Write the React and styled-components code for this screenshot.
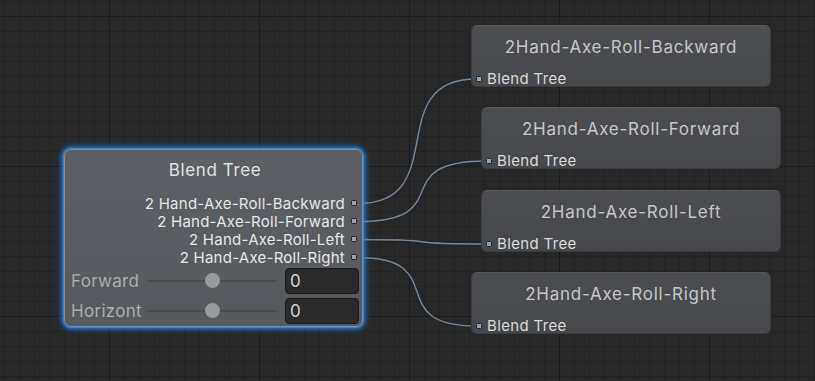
import React from 'react'
import styled, { createGlobalStyle } from 'styled-components'

const GlobalStyle = createGlobalStyle`
  html, body {
    margin: 0;
    padding: 0;
    background: #282828;
    overflow: hidden;
  }
  * {
    box-sizing: border-box;
  }
`

const Canvas = styled.div`
  position: relative;
  width: 815px;
  height: 381px;
  overflow: hidden;
  font-family: Inter, 'Noto Sans', sans-serif;
  background-color: #282828;
  background-image:
    linear-gradient(to right, #1b1b1b 1px, transparent 1px),
    linear-gradient(to bottom, #1b1b1b 1px, transparent 1px),
    linear-gradient(to right, #222222 1px, transparent 1px),
    linear-gradient(to bottom, #222222 1px, transparent 1px);
  background-size: 150px 150px, 150px 150px, 15px 15px, 15px 15px;
  background-position: 109px 16px, 109px 16px, 4px 1px, 4px 1px;
`

const Edges = styled.svg`
  position: absolute;
  left: 0;
  top: 0;
  width: 815px;
  height: 381px;
  z-index: 1;
`

const Edge = styled.path`
  fill: none;
  stroke: #7489a0;
  stroke-width: 1.4;
`

const Node = styled.div`
  position: absolute;
  z-index: 2;
  width: 300px;
  height: 62px;
  border-radius: 6px;
  background: linear-gradient(to bottom, #4b4d51, #46484c);
  border: 1px solid #3a3b3e;
  border-top-color: #56585c;
  display: flex;
  flex-direction: column;
`

const NodeTitle = styled.div`
  padding-top: 10px;
  height: 33px;
  text-align: center;
  font-size: 17px;
  letter-spacing: 0.75px;
  line-height: 22px;
  color: #c6c6c6;
`

const InputRow = styled.div`
  display: flex;
  align-items: center;
  gap: 5px;
  padding-left: 4px;
  margin-top: 11px;
  height: 20px;
  font-size: 15px;
  letter-spacing: 0.35px;
  color: #dadada;
`

const Port = styled.span`
  width: 6px;
  height: 6px;
  border-radius: 1.5px;
  background: #8ea4bb;
  border: 1px solid #222427;
  flex: 0 0 auto;
`

const BlendNode = styled.div`
  position: absolute;
  z-index: 2;
  left: 64px;
  top: 149px;
  width: 299px;
  height: 178px;
  border-radius: 7px;
  background: linear-gradient(to bottom, #5c5f64, #56595e);
  border: 1px solid #8a8e94;
  box-shadow:
    0 0 0 1px #2f83dc,
    0 0 4px 2px rgba(48, 140, 235, 0.85),
    0 0 8px 3px rgba(30, 110, 210, 0.35);
  padding: 9px 3px 0 6px;
  display: flex;
  flex-direction: column;
`

const BlendTitle = styled.div`
  height: 22px;
  line-height: 22px;
  text-align: center;
  font-size: 17px;
  letter-spacing: 0.6px;
  color: #e2e2e2;
  margin-bottom: 13px;
`

const Outputs = styled.div`
  display: flex;
  flex-direction: column;
  align-items: flex-end;
  margin-bottom: 2px;
`

const OutputRow = styled.div`
  display: flex;
  align-items: center;
  gap: 6px;
  height: 18px;
  font-size: 15px;
  letter-spacing: 0.25px;
  color: #e6e6e6;
  padding-right: 2px;
`

const ParamRow = styled.div`
  display: grid;
  grid-template-columns: 76px 130px 1fr;
  align-items: center;
  height: 26px;
  margin-bottom: 4px;
`

const ParamLabel = styled.span`
  font-size: 17px;
  letter-spacing: 0.3px;
  color: #ababab;
  white-space: nowrap;
  overflow: hidden;
`

const Slider = styled.div`
  position: relative;
  height: 2px;
  background: #484a4e;
  border-radius: 1px;
`

const Knob = styled.div`
  position: absolute;
  top: -7px;
  left: 58px;
  width: 15px;
  height: 15px;
  border-radius: 50%;
  background: #999a9c;
`

const ValueField = styled.div`
  margin-left: 8px;
  height: 26px;
  border-radius: 4px;
  background: #2a2a2a;
  border: 1px solid #1c1c1c;
  padding-left: 4px;
  font-size: 17px;
  line-height: 24px;
  color: #d2d2d2;
`

const clips = [
  { name: '2Hand-Axe-Roll-Backward', x: 471, y: 25, out: '2 Hand-Axe-Roll-Backward' },
  { name: '2Hand-Axe-Roll-Forward', x: 481, y: 107, out: '2 Hand-Axe-Roll-Forward' },
  { name: '2Hand-Axe-Roll-Left', x: 481, y: 190, out: '2 Hand-Axe-Roll-Left' },
  { name: '2Hand-Axe-Roll-Right', x: 471, y: 272, out: '2 Hand-Axe-Roll-Right' },
]

const params = ['Forward', 'Horizont']

const edgePath = (x0, y0, x1, y1) => {
  const d = (x1 - x0) * 0.8
  return `M${x0} ${y0} C${x0 + d} ${y0} ${x1 - d} ${y1} ${x1} ${y1}`
}

const App = () => (
  <Canvas>
    <GlobalStyle />
    <Edges viewBox="0 0 815 381">
      {clips.map((clip, i) => (
        <Edge key={clip.name} d={edgePath(358, 203.5 + i * 18, clip.x + 5, clip.y + 54)} />
      ))}
    </Edges>

    <BlendNode>
      <BlendTitle>Blend Tree</BlendTitle>
      <Outputs>
        {clips.map((clip) => (
          <OutputRow key={clip.out}>
            {clip.out}
            <Port />
          </OutputRow>
        ))}
      </Outputs>
      {params.map((p) => (
        <ParamRow key={p}>
          <ParamLabel>{p}</ParamLabel>
          <Slider>
            <Knob />
          </Slider>
          <ValueField>0</ValueField>
        </ParamRow>
      ))}
    </BlendNode>

    {clips.map((clip) => (
      <Node key={clip.name} style={{ left: clip.x, top: clip.y }}>
        <NodeTitle>{clip.name}</NodeTitle>
        <InputRow>
          <Port />
          Blend Tree
        </InputRow>
      </Node>
    ))}
  </Canvas>
)

export default App
